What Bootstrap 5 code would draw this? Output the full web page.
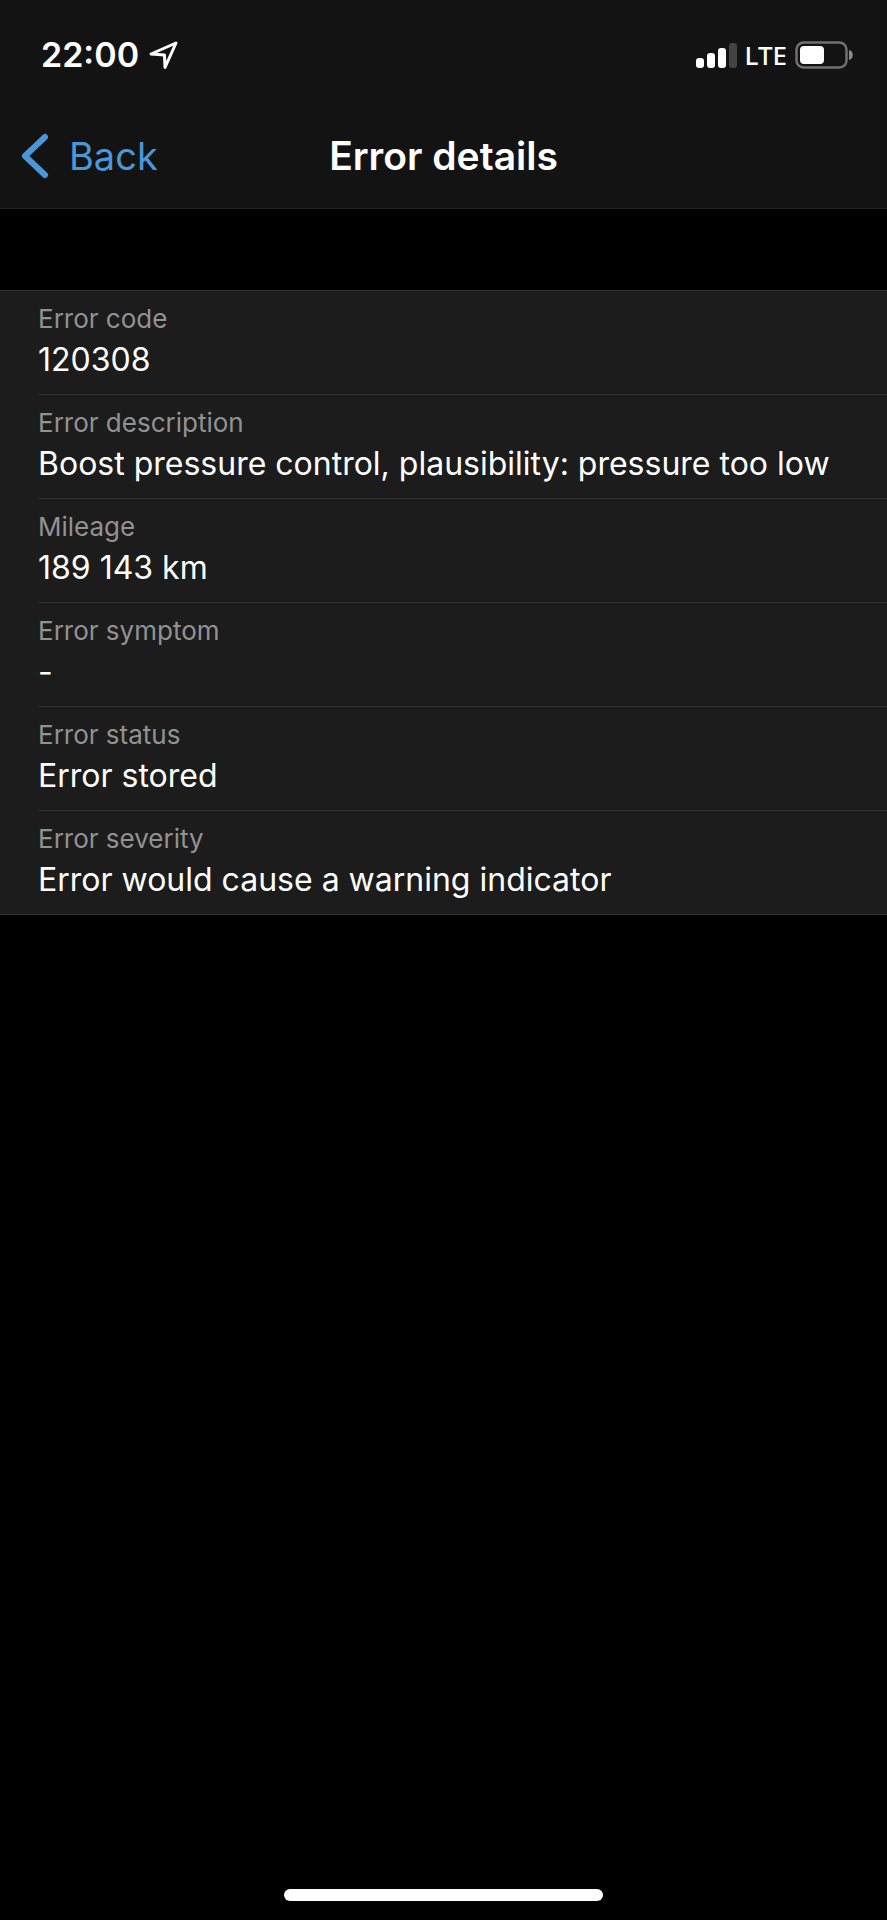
<!DOCTYPE html>
<html lang="en" data-bs-theme="dark">
<head>
<meta charset="utf-8">
<meta name="viewport" content="width=device-width, initial-scale=1">
<title>Error details</title>
<link href="https://cdn.jsdelivr.net/npm/bootstrap@5.3.0/dist/css/bootstrap.min.css" rel="stylesheet">
<style>
  body { background: #000; color: #fff; font-family: Inter, "Liberation Sans", sans-serif; }
  .top-area { background: #131313; border-bottom: 1px solid #222; }
  .status-row { height: 108px; padding: 2px 33px 0 41px; }
  .clock { font-size: 34px; line-height: 40px; font-weight: 600; }
  .carrier { font-family: "Noto Sans", sans-serif; font-size: 26px; line-height: 32px; font-weight: 500; }
  .title-row { display: grid; grid-template-columns: 1fr auto 1fr; height: 100px; padding: 0 20px 4px; }
  .back-link { color: #4a97d9; font-size: 38px; line-height: 48px; gap: 19px; }
  .page-title { font-size: 39px; line-height: 48px; font-weight: 600; }
  .detail-list { margin-top: 81px; background: #1c1c1c; border-top: 1px solid #323236; }
  .detail-item { margin-left: 38px; height: 104px; padding-top: 11px; border-bottom: 1px solid #323236; }
  .detail-item:last-child { margin-left: 0; padding-left: 38px; }
  .detail-item dt { font-size: 26px; line-height: 34px; font-weight: 400; color: #929292; }
  .detail-item dd { font-size: 32px; line-height: 48px; }
  .home-bar { width: 36%; height: 12px; border-radius: 6px; background: #fff; margin-bottom: 19px; }
</style>
</head>
<body class="d-flex flex-column min-vh-100">
<header class="top-area">
  <div class="status-row d-flex align-items-center justify-content-between">
    <div class="d-flex align-items-center gap-2">
      <span class="clock">22:00</span>
      <svg width="32" height="30" viewBox="0 0 32 30" fill="none" stroke="#fff" stroke-width="3" stroke-linejoin="round" aria-hidden="true"><path d="M29 3 4 14 17.500 15 18 27.500Z"/></svg>
    </div>
    <div class="d-flex align-items-center">
      <svg width="41" height="26" viewBox="0 0 41 26" fill="#fff" aria-hidden="true"><rect y="16" width="8" height="10" rx="3"/><rect x="11" y="11" width="8" height="15" rx="3"/><rect x="22" y="6" width="8" height="20" rx="3"/><rect x="33" y="1" width="8" height="25" rx="3" fill="#434343"/></svg>
      <span class="carrier mx-2">LTE</span>
      <svg width="59" height="28" viewBox="0 0 59 28" aria-hidden="true"><rect x="1.500" y="1.500" width="50" height="25" rx="7" fill="none" stroke="#707070" stroke-width="2.500"/><rect x="5" y="5" width="24" height="18" rx="4" fill="#fff"/><path d="M54 9c5 1 5 9 0 10z" fill="#8a8a8a"/></svg>
    </div>
  </div>
  <nav class="title-row align-items-center">
    <a class="back-link d-inline-flex align-items-center text-decoration-none" href="#">
      <svg width="30" height="46" viewBox="0 0 30 46" fill="none" stroke="currentColor" stroke-width="6" stroke-linecap="round" stroke-linejoin="round" aria-hidden="true"><path d="M25 4 5 23 25 42"/></svg>
      <span>Back</span>
    </a>
    <h1 class="page-title m-0">Error details</h1>
  </nav>
</header>
<main>
  <dl class="detail-list mb-0">
    <div class="detail-item"><dt>Error code</dt><dd class="m-0">120308</dd></div>
    <div class="detail-item"><dt>Error description</dt><dd class="m-0">Boost pressure control, plausibility: pressure too low</dd></div>
    <div class="detail-item"><dt>Mileage</dt><dd class="m-0">189 143 km</dd></div>
    <div class="detail-item"><dt>Error symptom</dt><dd class="m-0">-</dd></div>
    <div class="detail-item"><dt>Error status</dt><dd class="m-0">Error stored</dd></div>
    <div class="detail-item"><dt>Error severity</dt><dd class="m-0">Error would cause a warning indicator</dd></div>
  </dl>
</main>
<div class="home-bar mt-auto mx-auto"></div>
<script src="https://cdn.jsdelivr.net/npm/bootstrap@5.3.0/dist/js/bootstrap.bundle.min.js"></script>
</body>
</html>
